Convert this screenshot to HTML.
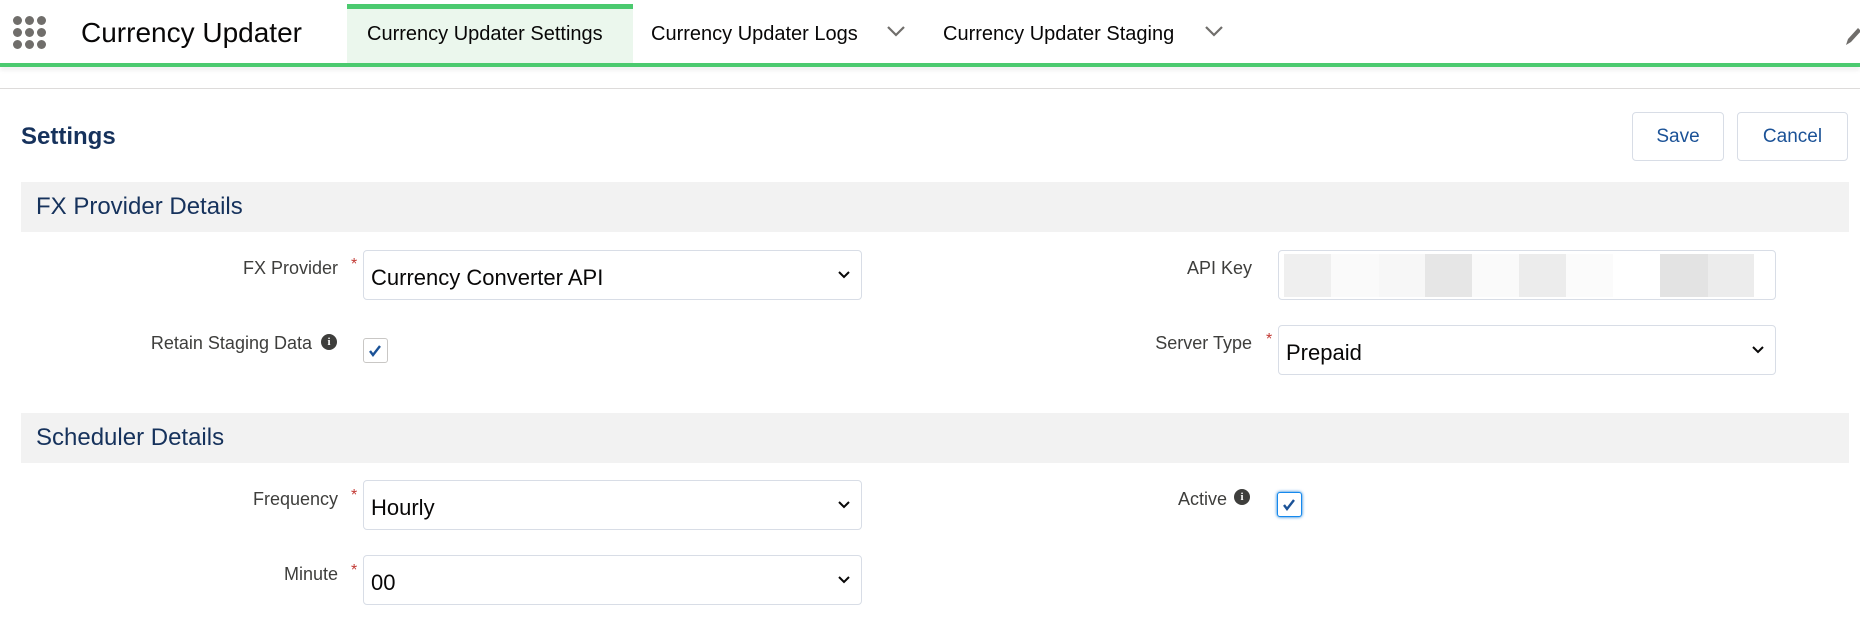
<!DOCTYPE html>
<html><head><meta charset="utf-8"><style>
*{box-sizing:border-box;margin:0;padding:0}
body{width:1860px;height:633px;background:#fff;font-family:"Liberation Sans",sans-serif;position:relative;overflow:hidden;color:#080707}
.a{position:absolute}
.dot{position:absolute;width:9px;height:9px;border-radius:50%;background:#706e6b}
.tab{position:absolute;top:22px;font-size:20px;color:#080707;white-space:nowrap}
.chev{position:absolute;top:24px}
.sec{position:absolute;left:21px;width:1828px;height:50px;background:#f2f2f2;color:#16325c;font-size:24px;padding:11px 0 0 15px}
.lbl{position:absolute;font-size:18px;color:#3e3e3c;text-align:right;white-space:nowrap}
.ast{position:absolute;color:#c23934;font-size:16px}
.sel{position:absolute;height:50px;border:1px solid #d8dde6;border-radius:4px;font-size:22px;padding:14px 0 0 7px;color:#080707}
.sel svg{position:absolute;right:10px;top:19px}
.btn{position:absolute;top:112px;height:49px;border:1px solid #d8dde6;border-radius:4px;color:#1b5297;font-size:19px;text-align:center;line-height:47px}
.cb{position:absolute;width:25px;height:25px;border:1px solid #c9c7c5;border-radius:3px;background:#fff}
.info{position:absolute;width:16px;height:16px;border-radius:50%;background:#3e3e3c;color:#fff;font-size:11px;font-weight:bold;text-align:center;line-height:16px;font-family:"Liberation Serif",serif}
</style></head><body>
<div class="dot" style="left:13px;top:16px"></div><div class="dot" style="left:25px;top:16px"></div><div class="dot" style="left:37px;top:16px"></div>
<div class="dot" style="left:13px;top:28px"></div><div class="dot" style="left:25px;top:28px"></div><div class="dot" style="left:37px;top:28px"></div>
<div class="dot" style="left:13px;top:40px"></div><div class="dot" style="left:25px;top:40px"></div><div class="dot" style="left:37px;top:40px"></div>
<div class="a" style="left:81px;top:17px;font-size:28px;color:#080707">Currency Updater</div>
<div class="a" style="left:347px;top:4px;width:286px;height:60px;background:#ebf7ed;border-top:5px solid #4bca6f"></div>
<div class="tab" style="left:367px;top:23px">Currency Updater Settings</div>
<div class="tab" style="left:651px;top:23px">Currency Updater Logs</div>
<svg class="chev" style="left:886px" width="20" height="14" viewBox="0 0 20 14"><path d="M2 3l8 8 8-8" fill="none" stroke="#706e6b" stroke-width="2.2"/></svg>
<div class="tab" style="left:943px;top:23px">Currency Updater Staging</div>
<svg class="chev" style="left:1204px" width="20" height="14" viewBox="0 0 20 14"><path d="M2 3l8 8 8-8" fill="none" stroke="#706e6b" stroke-width="2.2"/></svg>
<svg class="a" style="left:1843px;top:26px" width="17" height="20" viewBox="0 0 17 20"><path d="M3 19l2-6 10-11 3 3-10 11z" fill="#706e6b"/></svg>
<div class="a" style="left:0;top:63px;width:1860px;height:4px;background:#4bca6f;box-shadow:0 3px 4px rgba(0,0,0,0.08)"></div>
<div class="a" style="left:0;top:88px;width:1860px;height:1px;background:#dddbda"></div>
<div class="a" style="left:21px;top:123px;font-size:24px;font-weight:bold;color:#16325c">Settings</div>
<div class="btn" style="left:1632px;width:92px">Save</div>
<div class="btn" style="left:1737px;width:111px">Cancel</div>
<div class="sec" style="top:182px">FX Provider Details</div>
<div class="lbl" style="right:1522px;top:258px">FX Provider</div><div class="ast" style="left:351px;top:256px">*</div>
<div class="sel" style="left:363px;top:250px;width:499px">Currency Converter API<svg width="14" height="10" viewBox="0 0 14 10"><path d="M2 2l5 5 5-5" fill="none" stroke="#080707" stroke-width="2"/></svg></div>
<div class="lbl" style="right:608px;top:258px">API Key</div>
<div class="a" style="left:1278px;top:250px;width:498px;height:50px;border:1px solid #d8dde6;border-radius:4px;overflow:hidden">
<div class="a" style="left:5px;top:3px;height:43px;width:470px;background:linear-gradient(to right,#efefef 0 47px,#fafafa 47px 95px,#f7f7f7 95px 141px,#e6e6e6 141px 188px,#fafafa 188px 235px,#ececec 235px 282px,#fbfbfb 282px 329px,#fff 329px 376px,#e3e3e3 376px 424px,#ececec 424px 470px)"></div></div>
<div class="lbl" style="right:1548px;top:333px">Retain Staging Data</div><div class="info" style="left:321px;top:334px">i</div>
<div class="cb" style="left:363px;top:338px"><svg width="23" height="23" viewBox="0 0 23 23"><path d="M6 12l3 4 7-9" fill="none" stroke="#1b5297" stroke-width="2.4"/></svg></div>
<div class="lbl" style="right:608px;top:333px">Server Type</div><div class="ast" style="left:1266px;top:331px">*</div>
<div class="sel" style="left:1278px;top:325px;width:498px">Prepaid<svg width="14" height="10" viewBox="0 0 14 10"><path d="M2 2l5 5 5-5" fill="none" stroke="#080707" stroke-width="2"/></svg></div>
<div class="sec" style="top:413px">Scheduler Details</div>
<div class="lbl" style="right:1522px;top:489px">Frequency</div><div class="ast" style="left:351px;top:487px">*</div>
<div class="sel" style="left:363px;top:480px;width:499px">Hourly<svg width="14" height="10" viewBox="0 0 14 10"><path d="M2 2l5 5 5-5" fill="none" stroke="#080707" stroke-width="2"/></svg></div>
<div class="lbl" style="right:633px;top:489px">Active</div><div class="info" style="left:1234px;top:489px">i</div>
<div class="cb" style="left:1277px;top:492px;border-color:#1589ee;box-shadow:0 0 3px #0070d2"><svg width="23" height="23" viewBox="0 0 23 23"><path d="M6 12l3 4 7-9" fill="none" stroke="#1b5297" stroke-width="2.4"/></svg></div>
<div class="lbl" style="right:1522px;top:564px">Minute</div><div class="ast" style="left:351px;top:562px">*</div>
<div class="sel" style="left:363px;top:555px;width:499px">00<svg width="14" height="10" viewBox="0 0 14 10"><path d="M2 2l5 5 5-5" fill="none" stroke="#080707" stroke-width="2"/></svg></div>
</body></html>
